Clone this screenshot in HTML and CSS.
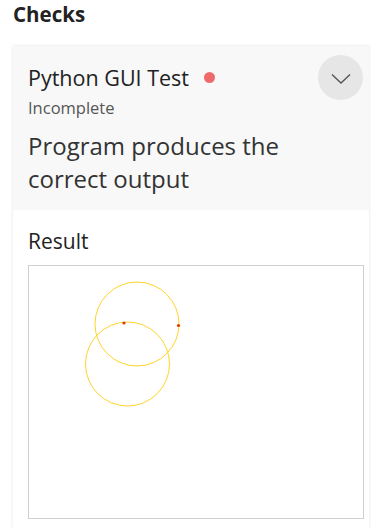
FILE: index.html
```html
<!DOCTYPE html>
<html lang="en">

<head>
    <meta charset="UTF-8">
    <meta name="viewport" content="width=device-width, initial-scale=1.0">
    <title>Checks</title>
    <link rel="stylesheet" href="styles.css">
</head>

<body>
    <h2 class="page-title">Checks</h2>
    <div class="check-card">
        <div class="check-head">
            <div class="check-top">
                <div class="check-name">
                    <span>Python GUI Test</span>
                    <span class="status-dot"></span>
                </div>
                <button class="toggle-btn" aria-label="Expand">
                    <svg width="20" height="12" viewBox="0 0 20 12">
                        <path d="M1 1.5 L10 10 L19 1.5" fill="none" stroke="#555" stroke-width="1.4" />
                    </svg>
                </button>
            </div>
            <div class="check-status">Incomplete</div>
            <p class="check-desc">Program produces the correct output</p>
        </div>
        <div class="check-body">
            <h3 class="result-title">Result</h3>
            <div class="result-box">
                <!-- turtle output -->
                <svg width="334" height="252" viewBox="0 0 334 252">
                    <circle cx="108" cy="58" r="42" fill="none" stroke="#ffd42a" stroke-width="1" />
                    <circle cx="98.5" cy="98" r="42" fill="none" stroke="#ffd42a" stroke-width="1" />
                    <circle cx="95" cy="57" r="1.6" fill="#e03a00" />
                    <circle cx="149.5" cy="59.5" r="1.6" fill="#e03a00" />
                </svg>
            </div>
        </div>
    </div>
</body>

</html>
```

FILE: styles.css
```css
body {
    margin: 0;
    padding: 0 13px;
    font-family: "Open Sans", "Noto Sans", sans-serif;
    color: #222;
    background: #fff;
}

.page-title {
    margin: 0;
    font-size: 20.5px;
    font-weight: 700;
    line-height: 28px;
    color: #222;
}

.check-card {
    margin-top: 18px;
    width: 356px;
    background: #fff;
    box-shadow: 0 0 3px rgba(0, 0, 0, 0.12);
}

.check-head {
    background: #f8f8f8;
    padding: 9px 6px 15px 15px;
}

.check-top {
    display: flex;
    justify-content: space-between;
    align-items: center;
}

.check-name {
    display: flex;
    align-items: center;
    gap: 15px;
    font-size: 21.5px;
    color: #222;
}

.status-dot {
    width: 11px;
    height: 11px;
    border-radius: 50%;
    background: #ef6b6b;
}

.toggle-btn {
    width: 45px;
    height: 45px;
    border: none;
    border-radius: 50%;
    background: #e6e6e6;
    display: flex;
    align-items: center;
    justify-content: center;
    padding: 0;
    padding-top: 2px;
}

.check-status {
    margin-top: -2px;
    font-size: 16.5px;
    line-height: 20px;
    color: #555;
}

.check-desc {
    margin: 11px 0 0;
    font-size: 24px;
    line-height: 33px;
    color: #333;
    width: 290px;
}

.check-body {
    padding: 17px 6px 10px 15px;
}

.result-title {
    margin: 0;
    font-size: 21px;
    font-weight: 400;
    line-height: 28px;
    color: #222;
}

.result-box {
    margin-top: 10px;
    width: 334px;
    height: 252px;
    border: 1px solid #cfcfcf;
}

.result-box svg {
    display: block;
}
```
